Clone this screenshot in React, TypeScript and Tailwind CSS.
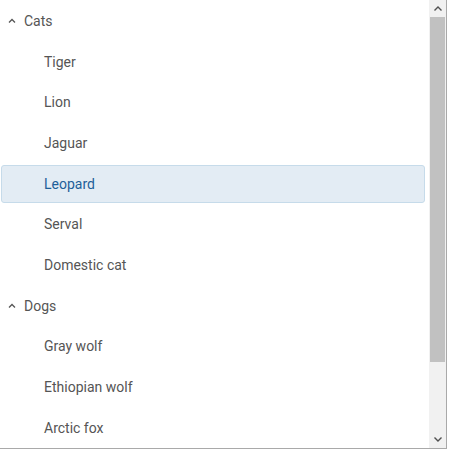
import { Fragment } from 'react'

type Group = { name: string; items: string[] }

const groups: Group[] = [
  { name: 'Cats', items: ['Tiger', 'Lion', 'Jaguar', 'Leopard', 'Serval', 'Domestic cat'] },
  { name: 'Dogs', items: ['Gray wolf', 'Ethiopian wolf', 'Arctic fox'] }
]

const selected = 'Leopard'

function Caret() {
  return (
    <svg width="8" height="6" viewBox="0 0 8 6">
      <path d="M1 4.5 L4 1.5 L7 4.5" fill="none" stroke="#555" strokeWidth="1.3" />
    </svg>
  )
}

function Row({ label, active }: { label: string; active: boolean }) {
  return (
    <li className="h-[40.7px] py-[1.35px] pr-[2px] pl-px">
      <div
        className={
          active
            ? 'flex h-full items-center rounded-[3px] border border-[#c6dbea] bg-[#e3ecf4] pl-[42px] text-[#1e5f99]'
            : 'flex h-full items-center border border-transparent pl-[42px] text-[#555]'
        }
      >
        {label}
      </div>
    </li>
  )
}

export default function App() {
  return (
    <div className="flex h-[449px] w-[447px] border-r border-b border-[#a9a9a9] bg-white font-['Roboto',sans-serif] text-[14px]">
      <ul className="flex-1 overflow-hidden pt-[1px]">
        {groups.map((g) => (
          <Fragment key={g.name}>
            <li className="flex h-[40.7px] items-center gap-[8px] pl-[8px] text-[#555]">
              <Caret />
              <span>{g.name}</span>
            </li>
            {g.items.map((item) => (
              <Row key={item} label={item} active={item === selected} />
            ))}
          </Fragment>
        ))}
      </ul>
      <div className="ml-[2px] flex w-[17px] flex-col bg-[#f1f1f1]">
        <div className="flex h-[17px] items-center justify-center">
          <svg width="8" height="5" viewBox="0 0 8 5">
            <path d="M0.5 4.5 L4 1 L7.5 4.5" fill="none" stroke="#505050" strokeWidth="1.4" />
          </svg>
        </div>
        <div className="mx-px h-[345px] bg-[#c1c1c1]" />
        <div className="flex-1" />
        <div className="flex h-[17px] items-center justify-center">
          <svg width="8" height="5" viewBox="0 0 8 5">
            <path d="M0.5 0.5 L4 4 L7.5 0.5" fill="none" stroke="#505050" strokeWidth="1.4" />
          </svg>
        </div>
      </div>
    </div>
  )
}
